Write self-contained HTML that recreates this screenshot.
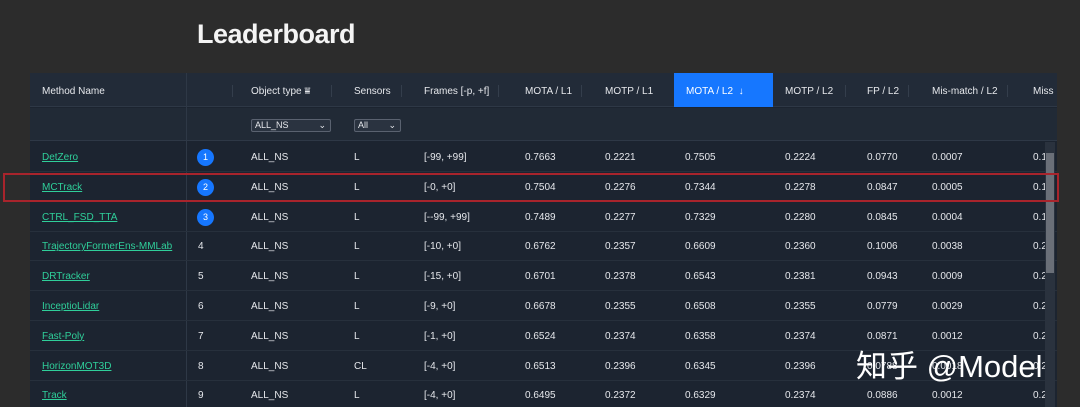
<!DOCTYPE html>
<html><head><meta charset="utf-8"><style>
*{margin:0;padding:0;box-sizing:border-box}
body{width:1080px;height:407px;background:#2c2c2c;font-family:"Liberation Sans",sans-serif;overflow:hidden;position:relative;color:#e6e8ec}
h1{position:absolute;left:197px;top:19px;font-size:27px;font-weight:bold;color:#f4f4f4;letter-spacing:-0.5px}
.tbl{position:absolute;left:30px;top:73px;width:1027px;height:334px;background:#1c2430;overflow:hidden}
.hdr{position:absolute;left:0;top:0;width:1027px;height:34px;background:#222b38;border-bottom:1px solid #2e3846}
.flt{position:absolute;left:0;top:35px;width:1027px;height:33px;background:#212a36;border-bottom:1px solid #2e3846}
.t{position:absolute;font-size:10px;white-space:nowrap;line-height:12px}
.vline{position:absolute;left:156px;top:0;width:1px;height:334px;background:#2e3846}
.row{position:absolute;left:0;width:1027px;height:30px;border-bottom:1px solid #27303c}
.a{color:#2fcf9a;text-decoration:underline}
.rk{position:absolute;width:17px;height:17px;border-radius:50%;background:#1677ff;color:#fff;font-size:9px;text-align:center;line-height:17px}
.sel{position:absolute;height:13px;border:1px solid #5a6270;background:#2a3340;border-radius:2px;font-size:9px;line-height:11px;padding-left:3px;color:#e6e8ec}
.sep{position:absolute;top:12px;width:1px;height:12px;background:#343e4c}
</style></head><body>
<h1>Leaderboard</h1>
<div class="tbl">
<div class="hdr">
<div style="position:absolute;left:644px;top:0;width:99px;height:34px;background:#1677ff"></div>
<span class="t" style="left:12px;top:13px">Method Name</span>
<div class="sep" style="left:202px"></div>
<span class="t" style="left:221px;top:13px">Object type ⩸</span>
<div class="sep" style="left:301px"></div>
<span class="t" style="left:324px;top:13px">Sensors</span>
<div class="sep" style="left:371px"></div>
<span class="t" style="left:394px;top:13px">Frames [-p, +f]</span>
<div class="sep" style="left:468px"></div>
<span class="t" style="left:495px;top:13px">MOTA / L1</span>
<div class="sep" style="left:551px"></div>
<span class="t" style="left:575px;top:13px">MOTP / L1</span>
<span class="t" style="left:656px;top:13px;color:#fff">MOTA / L2 &nbsp;↓</span>
<span class="t" style="left:755px;top:13px">MOTP / L2</span>
<div class="sep" style="left:815px"></div>
<span class="t" style="left:837px;top:13px">FP / L2</span>
<div class="sep" style="left:878px"></div>
<span class="t" style="left:902px;top:13px">Mis-match / L2</span>
<div class="sep" style="left:977px"></div>
<span class="t" style="left:1003px;top:13px">Miss</span>
</div>
<div class="flt">
<div class="sel" style="left:221px;top:11px;width:80px">ALL_NS<span style="position:absolute;right:4px">⌄</span></div>
<div class="sel" style="left:324px;top:11px;width:47px">All<span style="position:absolute;right:4px">⌄</span></div>
</div>
<div class="vline"></div>
<div id="rows"></div>
<div style="position:absolute;left:1015px;top:69px;width:10px;height:265px;background:#2a323e"></div>
<div style="position:absolute;left:1016px;top:80px;width:8px;height:120px;background:#6a6f78"></div>
</div>
<div style="position:absolute;left:3px;top:173px;width:1056px;height:29px;border:2px solid #a8242c"></div>
<div style="position:absolute;left:856px;top:341px;font-family:'Liberation Sans','Noto Sans CJK SC',sans-serif;font-size:31px;color:#fff;white-space:nowrap">知乎 @Model</div>
<script>
var d=[["DetZero",1,"L","[-99, +99]","0.7663","0.2221","0.7505","0.2224","0.0770","0.0007","0.1"],
["MCTrack",2,"L","[-0, +0]","0.7504","0.2276","0.7344","0.2278","0.0847","0.0005","0.1"],
["CTRL_FSD_TTA",3,"L","[--99, +99]","0.7489","0.2277","0.7329","0.2280","0.0845","0.0004","0.1"],
["TrajectoryFormerEns-MMLab",4,"L","[-10, +0]","0.6762","0.2357","0.6609","0.2360","0.1006","0.0038","0.2"],
["DRTracker",5,"L","[-15, +0]","0.6701","0.2378","0.6543","0.2381","0.0943","0.0009","0.2"],
["InceptioLidar",6,"L","[-9, +0]","0.6678","0.2355","0.6508","0.2355","0.0779","0.0029","0.2"],
["Fast-Poly",7,"L","[-1, +0]","0.6524","0.2374","0.6358","0.2374","0.0871","0.0012","0.2"],
["HorizonMOT3D",8,"CL","[-4, +0]","0.6513","0.2396","0.6345","0.2396","0.0788","0.0018","0.2"],
["Track",9,"L","[-4, +0]","0.6495","0.2372","0.6329","0.2374","0.0886","0.0012","0.2"]];
var x=[495,575,655,755,837,902,1003],h="";
d.forEach(function(r,i){var y=69+i*29.8;h+='<div class="row" style="top:'+y+'px">';
h+='<span class="t a" style="left:12px;top:10px">'+r[0]+'</span>';
h+=r[1]<=3?'<div class="rk" style="left:167px;top:7px">'+r[1]+'</div>':'<span class="t" style="left:168px;top:10px">'+r[1]+'</span>';
h+='<span class="t" style="left:221px;top:10px">ALL_NS</span><span class="t" style="left:324px;top:10px">'+r[2]+'</span><span class="t" style="left:394px;top:10px">'+r[3]+'</span>';
for(var j=0;j<7;j++)h+='<span class="t" style="left:'+x[j]+'px;top:10px">'+r[4+j]+'</span>';
h+='</div>';});
document.getElementById('rows').innerHTML=h;
</script>
</body></html>
